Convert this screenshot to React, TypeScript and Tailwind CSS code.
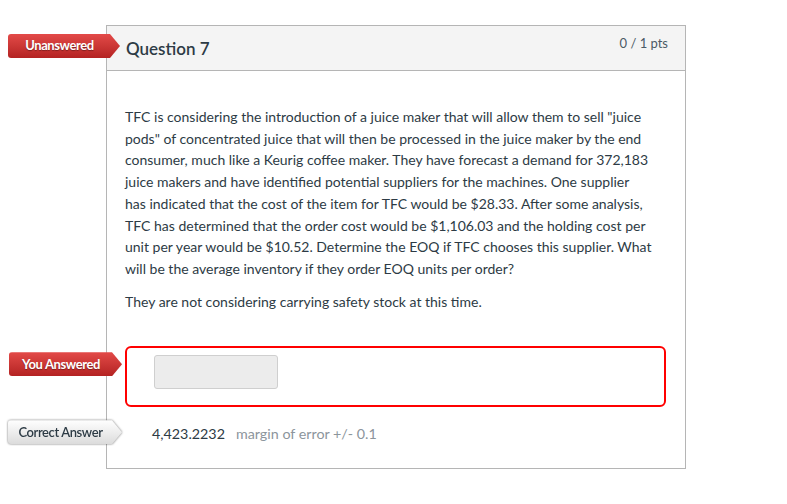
import React from "react";

function Badge({ label, tone, width }: { label: string; tone: "red" | "gray"; width: string }) {
  const red = tone === "red";
  return (
    <div
      className={`absolute flex h-[24px] items-center justify-center rounded-l-[3px] pr-[9px] text-[13px] font-bold tracking-[-0.4px] [clip-path:polygon(0_0,calc(100%-10px)_0,100%_50%,calc(100%-10px)_100%,0_100%)] ${width} ${
        red
          ? "bg-gradient-to-b from-[#e34a48] to-[#b42222] text-white [text-shadow:0_1px_1px_rgba(0,0,0,0.35)]"
          : "bg-gradient-to-b from-[#ffffff] to-[#dcdcdc] text-[#2d3b45] font-semibold"
      }`}
    >
      {label}
    </div>
  );
}

export default function App() {
  return (
    <div className="min-h-[504px] w-[787px] bg-white pt-[25px] font-['Lato','Noto_Sans',sans-serif] text-[#2d3b45]">
      <div className="relative ml-[106px] w-[580px] border border-[#b5b5b5] pb-[23px]">
        {/* header */}
        <div className="relative flex h-[45px] items-start justify-between border-b border-[#b5b5b5] bg-[#f4f4f4] pl-[19px] pr-[17px]">
          <div className="absolute left-[-99px] top-[8px]">
            <Badge label="Unanswered" tone="red" width="w-[112px]" />
          </div>
          <h2 className="mt-[10px] text-[17px] font-semibold">Question 7</h2>
          <div className="mt-[8px] text-[13px] text-[#4b5a66]">0 / 1 pts</div>
        </div>

        {/* body */}
        <div className="px-[18px] pt-[35px] text-[14px] leading-[21.7px]">
          <p>
            TFC is considering the introduction of a juice maker that will allow them to sell "juice
            <br />
            pods" of concentrated juice that will then be processed in the juice maker by the end
            <br />
            consumer, much like a Keurig coffee maker. They have forecast a demand for 372,183
            <br />
            juice makers and have identified potential suppliers for the machines. One supplier
            <br />
            has indicated that the cost of the item for TFC would be $28.33. After some analysis,
            <br />
            TFC has determined that the order cost would be $1,106.03 and the holding cost per
            <br />
            unit per year would be $10.52. Determine the EOQ if TFC chooses this supplier. What
            <br />
            will be the average inventory if they order EOQ units per order?
          </p>
          <p className="mt-[11px]">They are not considering carrying safety stock at this time.</p>
        </div>

        {/* your answer */}
        <div className="relative mt-[34px] ml-[18px] mr-[19px] h-[61px] rounded-[6px] border-2 border-[#ff0000] pl-[27px] pt-[7px]">
          <div className="absolute left-[-118px] top-[4px]">
            <Badge label="You Answered" tone="red" width="w-[113px]" />
          </div>
          <div className="h-[34px] w-[124px] rounded-[3px] border border-[#cfcfcf] bg-[#ececec]" />
        </div>

        {/* correct answer */}
        <div className="relative mt-[14px] flex h-[24px] items-center pl-[45px] text-[14.3px]">
          <div className="absolute left-[-99px] top-[-1px] drop-shadow-[0_0_1px_rgba(0,0,0,0.55)]">
            <Badge label="Correct Answer" tone="gray" width="w-[114px]" />
          </div>
          <span className="text-[#2d3b45]">4,423.2232</span>
          <span className="ml-[11px] text-[#8c959c]">margin of error +/- 0.1</span>
        </div>
      </div>
    </div>
  );
}
